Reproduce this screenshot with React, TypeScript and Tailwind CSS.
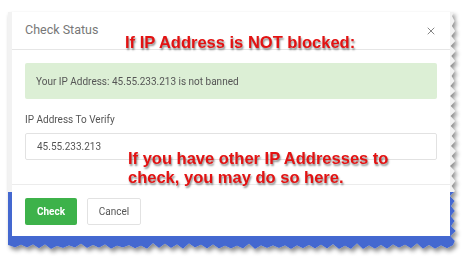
import { X } from 'lucide-react';

const W = 449;
const H = 238;

// deterministic jitter for the torn-paper edge
function jitter(i: number) {
  const s = Math.sin(i * 12.9898) * 43758.5453;
  return s - Math.floor(s);
}

function tornPolygon() {
  const pts: string[] = ['0px 0px', `${W - 3}px 0px`];
  let i = 0;
  for (let y = 4; y < H - 6; y += 5) {
    const x = W - 1 - (i % 2 === 0 ? 4 + jitter(i) * 2 : jitter(i) * 1.5);
    pts.push(`${x.toFixed(1)}px ${y}px`);
    i++;
  }
  for (let x = W - 4; x > 0; x -= 6) {
    const y = H - 1 - (i % 2 === 0 ? 3 + jitter(i) * 3 : jitter(i) * 1.5);
    pts.push(`${x}px ${y.toFixed(1)}px`);
    i++;
  }
  pts.push(`0px ${H - 5}px`);
  return `polygon(${pts.join(',')})`;
}

export default function App() {
  return (
    <div className="relative w-[474px] h-[260px] bg-white overflow-hidden font-['Roboto',sans-serif]">
      <div className="pl-[8px] pt-[8px] [filter:drop-shadow(2px_3px_2px_rgba(0,0,0,0.45))]">
        <div
          className="relative w-[449px] h-[238px] bg-[#f2f2f2]"
          style={{ clipPath: tornPolygon() }}
        >
          {/* page behind the modal */}
          <div className="absolute left-0 right-0 top-[180px] bottom-0 bg-[#4468d0]" />

          {/* Dialog */}
          <div className="relative ml-[4px] mt-[4px] w-[438px] h-[224px] bg-white flex flex-col">
            <div className="h-[38px] flex items-center justify-between pl-[13px] pr-[13px] border-b border-[#e6e6e6]">
              <span className="text-[12.5px] text-[#777]">Check Status</span>
              <X className="w-[12px] h-[12px] text-[#666]" strokeWidth={1.6} />
            </div>

            <div className="px-[13px] pt-[13px] pb-[24px] border-b border-[#ececec]">
              <div className="h-[36px] bg-[#dcefd5] rounded-[2px] flex items-center px-[11px] text-[10px] text-[#555]">
                Your IP Address: 45.55.233.213 is not banned
              </div>
              <div className="mt-[13px] text-[10px] text-[#555] leading-[16px]">IP Address To Verify</div>
              <div className="mt-[5px] h-[27px] border border-[#e2e2e2] rounded-[2px] flex items-center px-[11px] text-[10px] text-[#555]">
                45.55.233.213
              </div>
            </div>

            <div className="flex gap-[10px] px-[13px] pt-[13px]">
              <div className="w-[52px] h-[27px] bg-[#3db24a] rounded-[2px] flex items-center justify-center text-[10px] font-bold text-white">
                Check
              </div>
              <div className="w-[54px] h-[27px] border border-[#e2e2e2] rounded-[2px] flex items-center justify-center text-[10px] text-[#555]">
                Cancel
              </div>
            </div>
          </div>
        </div>
      </div>

      {/* Annotations */}
      <div className="absolute left-[125px] top-[33px] font-['Liberation_Sans',sans-serif] font-bold text-[16.5px] leading-[19px] text-[#e31212] [text-shadow:1px_2px_2px_rgba(0,0,0,0.45)]">
        If IP Address is NOT blocked:
      </div>
      <div className="absolute left-[128px] top-[149px] font-['Liberation_Sans',sans-serif] font-bold text-[16.5px] leading-[19px] text-[#e31212] [text-shadow:1px_2px_2px_rgba(0,0,0,0.45)]">
        If you have other IP Addresses to
        <br />
        check, you may do so here.
      </div>
    </div>
  );
}
